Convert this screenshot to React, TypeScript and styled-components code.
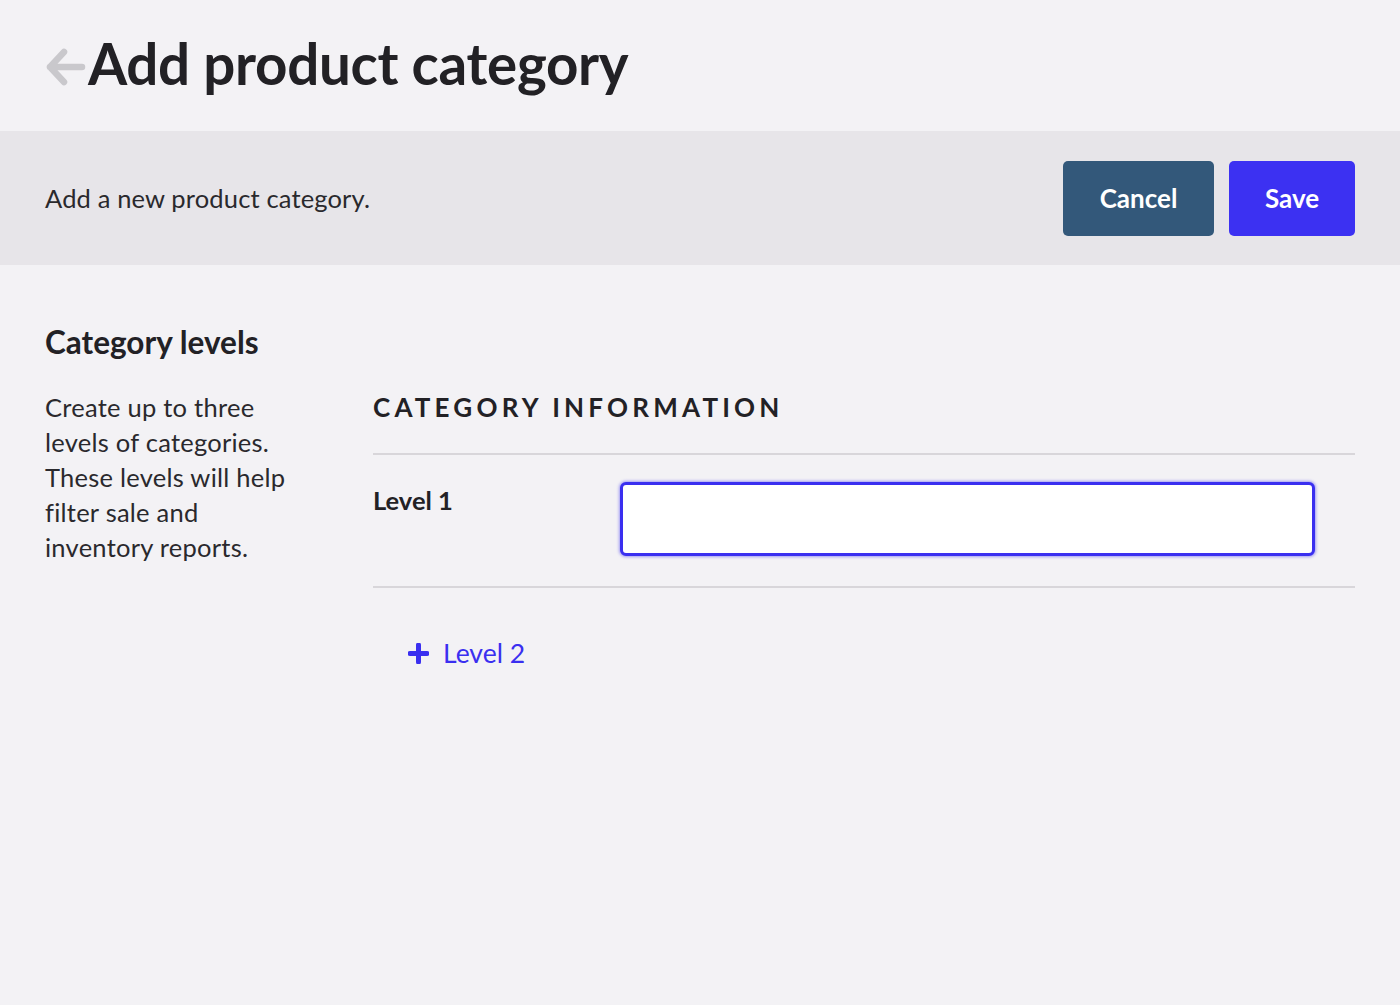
import React from 'react';
import styled, { createGlobalStyle } from 'styled-components';

const GlobalStyle = createGlobalStyle`
  body {
    margin: 0;
    background: #f3f2f5;
    font-family: Lato, "Open Sans", sans-serif;
    color: #222125;
  }
`;

const Page = styled.div`
  min-height: 1005px;
  background: #f3f2f5;
`;

const TitleBar = styled.header`
  display: flex;
  align-items: center;
  height: 131px;
  padding: 0 45px 6px 45px;
  box-sizing: border-box;
`;

const BackArrow = styled.svg`
  width: 42px;
  height: 46px;
  margin: 8px 1px 0 0;
  flex-shrink: 0;
`;

const Title = styled.h1`
  margin: 0;
  font-size: 56.5px;
  font-weight: 700;
  letter-spacing: -0.3px;
  color: #222125;
`;

const ActionBand = styled.div`
  display: flex;
  align-items: center;
  justify-content: space-between;
  height: 134px;
  padding: 0 45px;
  background: #e7e5e9;
  box-sizing: border-box;
`;

const Lead = styled.p`
  margin: 0;
  font-size: 25.5px;
  letter-spacing: 0.15px;
  color: #2a292d;
`;

const Actions = styled.div`
  display: flex;
  gap: 15px;
`;

const Button = styled.button<{ $variant: 'secondary' | 'primary' }>`
  height: 75px;
  min-width: ${p => (p.$variant === 'primary' ? '126px' : '151px')};
  padding: 0 24px;
  border: none;
  border-radius: 5px;
  font-family: inherit;
  font-size: 26px;
  font-weight: 700;
  color: #fff;
  background: ${p => (p.$variant === 'primary' ? '#3c31f2' : '#33587a')};
  cursor: pointer;
`;

const Content = styled.main`
  display: grid;
  grid-template-columns: 328px 1fr;
  padding: 58px 45px 0 45px;
`;

const Aside = styled.section``;

const AsideTitle = styled.h2`
  margin: 0 0 29px 0;
  font-size: 31.5px;
  font-weight: 700;
  color: #222125;
`;

const AsideText = styled.p`
  margin: 0;
  width: 250px;
  font-size: 25.5px;
  letter-spacing: 0.25px;
  line-height: 35px;
  color: #2a292d;
`;

const Form = styled.section`
  padding-top: 68px;
`;

const SectionLabel = styled.h3`
  margin: 0;
  padding-bottom: 30px;
  font-size: 26px;
  font-weight: 700;
  line-height: 32px;
  letter-spacing: 4.2px;
  color: #222125;
  border-bottom: 2px solid #d8d6da;
`;

const FieldRow = styled.div`
  display: grid;
  grid-template-columns: 247px 695px;
  padding: 27px 0 30px 0;
  border-bottom: 2px solid #d8d6da;
`;

const FieldLabel = styled.label`
  font-size: 25.5px;
  font-weight: 700;
  line-height: 36px;
  color: #222125;
`;

const TextInput = styled.input`
  height: 74px;
  box-sizing: border-box;
  border: 3px solid #3a2ff0;
  border-radius: 6px;
  background: #fff;
  box-shadow: 0 0 3px 1px rgba(58, 47, 240, 0.45);
  outline: none;
  font-family: inherit;
  font-size: 24px;
  padding: 0 16px;
`;

const AddLevel = styled.button`
  display: flex;
  align-items: center;
  gap: 14px;
  margin: 49px 0 0 35px;
  padding: 0;
  border: none;
  background: none;
  font-family: inherit;
  font-size: 26.5px;
  color: #3a2ff0;
  cursor: pointer;
`;

export default function App() {
  return (
    <Page>
      <GlobalStyle />
      <TitleBar>
        <BackArrow viewBox="0 0 42 46">
          <path
            d="M37 23H5M19 8L5 23l14 15"
            fill="none"
            stroke="#c9c8cc"
            strokeWidth="6.5"
            strokeLinecap="round"
            strokeLinejoin="round"
          />
        </BackArrow>
        <Title>Add product category</Title>
      </TitleBar>
      <ActionBand>
        <Lead>Add a new product category.</Lead>
        <Actions>
          <Button $variant="secondary">Cancel</Button>
          <Button $variant="primary">Save</Button>
        </Actions>
      </ActionBand>
      <Content>
        <Aside>
          <AsideTitle>Category levels</AsideTitle>
          <AsideText>
            Create up to three levels of categories. These levels will help filter sale and inventory reports.
          </AsideText>
        </Aside>
        <Form>
          <SectionLabel>CATEGORY INFORMATION</SectionLabel>
          <FieldRow>
            <FieldLabel htmlFor="level1">Level 1</FieldLabel>
            <TextInput id="level1" />
          </FieldRow>
          <AddLevel>
            <svg width="21" height="21" viewBox="0 0 21 21">
              <path d="M10.5 2v17M2 10.5h17" stroke="#3a2ff0" strokeWidth="5" strokeLinecap="round" />
            </svg>
            Level 2
          </AddLevel>
        </Form>
      </Content>
    </Page>
  );
}
